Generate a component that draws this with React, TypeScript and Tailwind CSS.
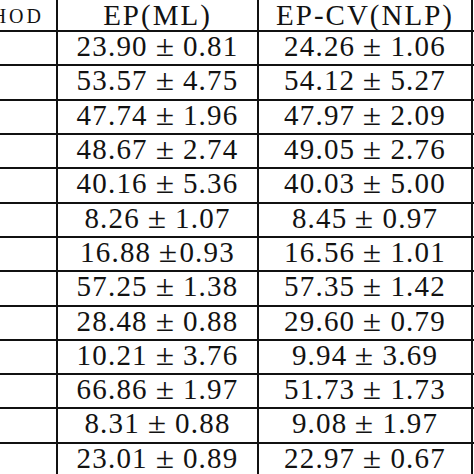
import React from "react";

const rows: { a: string; b: string; h: string }[] = [
  { a: "23.90 ± 0.81", b: "24.26 ± 1.06", h: "h-[34px]" },
  { a: "53.57 ± 4.75", b: "54.12 ± 5.27", h: "h-[35px]" },
  { a: "47.74 ± 1.96", b: "47.97 ± 2.09", h: "h-[34px]" },
  { a: "48.67 ± 2.74", b: "49.05 ± 2.76", h: "h-[34px]" },
  { a: "40.16 ± 5.36", b: "40.03 ± 5.00", h: "h-[35px]" },
  { a: "8.26 ± 1.07", b: "8.45 ± 0.97", h: "h-[34px]" },
  { a: "16.88 ±0.93", b: "16.56 ± 1.01", h: "h-[34px]" },
  { a: "57.25 ± 1.38", b: "57.35 ± 1.42", h: "h-[35px]" },
  { a: "28.48 ± 0.88", b: "29.60 ± 0.79", h: "h-[34px]" },
  { a: "10.21 ± 3.76", b: "9.94 ± 3.69", h: "h-[34px]" },
  { a: "66.86 ± 1.97", b: "51.73 ± 1.73", h: "h-[34px]" },
  { a: "8.31 ± 0.88", b: "9.08 ± 1.97", h: "h-[35px]" },
  { a: "23.01 ± 0.89", b: "22.97 ± 0.67", h: "h-[35px]" },
];

function Val({ text }: { text: string }) {
  const [left, right] = text.split("±");
  const spaceAfter = right.startsWith(" ");
  return (
    <span className="whitespace-nowrap tracking-[1.2px]">
      {left.trim()}
      <span
        className="ml-[9px] inline-block scale-x-[1.15]"
        style={{ marginRight: spaceAfter ? 9 : 2 }}
      >
        ±
      </span>
      {right.trim()}
    </span>
  );
}

export default function App() {
  return (
    <div
      className="w-[474px] h-[474px] overflow-hidden bg-white text-[#121212]"
      style={{ fontFamily: '"Liberation Serif", "Times New Roman", serif' }}
    >
      <div className="flex h-[32px] border-b-2 border-[#111]">
        <div className="w-[58px] shrink-0 border-r-2 border-[#111] overflow-hidden flex justify-end pr-[12px] pt-[6px]">
          <span className="whitespace-nowrap text-[20px] leading-[20px] tracking-[3px]">METHOD</span>
        </div>
        <div className="w-[201px] shrink-0 border-r-2 border-[#111] flex justify-center pt-[1px] text-[29px] leading-[29px] tracking-[2px]">
          EP(ML)
        </div>
        <div className="w-[214px] shrink-0 border-r-2 border-[#111] flex justify-center pt-[1px] text-[29px] leading-[29px] tracking-[2px]">
          EP-CV(NLP)
        </div>
      </div>
      {rows.map((r, i) => (
        <div key={i} className={`flex border-b-2 border-[#111] ${r.h}`}>
          <div className="w-[58px] shrink-0 border-r-2 border-[#111]" />
          <div className="w-[201px] shrink-0 border-r-2 border-[#111] flex justify-center text-[29px] leading-[28px]">
            <Val text={r.a} />
          </div>
          <div className="w-[214px] shrink-0 border-r-2 border-[#111] flex justify-center text-[29px] leading-[28px]">
            <Val text={r.b} />
          </div>
        </div>
      ))}
    </div>
  );
}
